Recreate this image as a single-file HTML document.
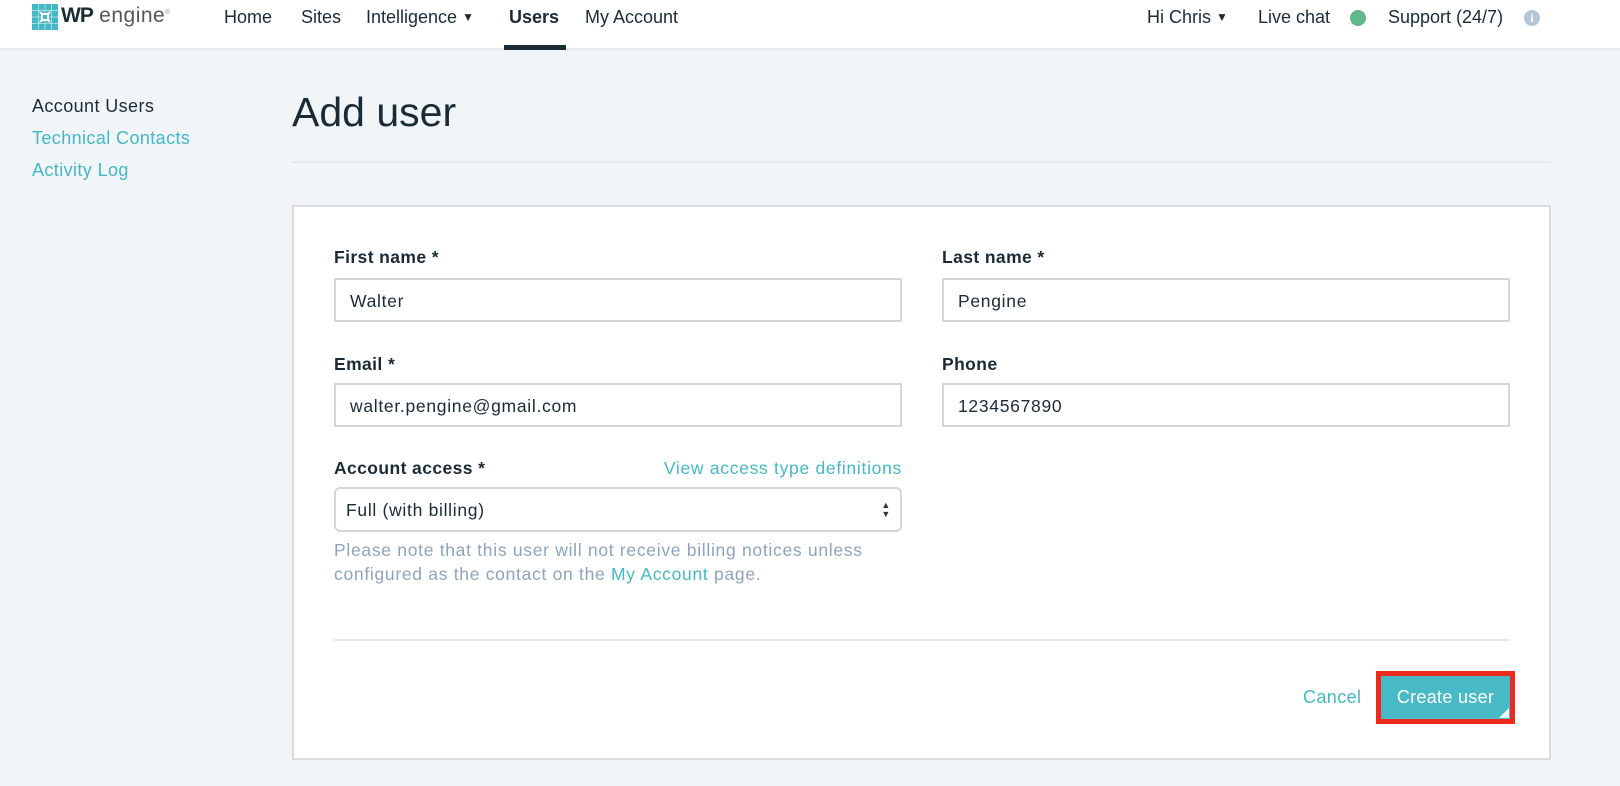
<!DOCTYPE html>
<html><head><meta charset="utf-8"><style>
*{box-sizing:border-box;margin:0;padding:0}
body{width:1620px;height:786px;background:#f2f5f8;font-family:"Liberation Sans",Arial,sans-serif;color:#1b2b36;position:relative;overflow:hidden}
.hdr{position:absolute;left:0;top:0;width:1620px;height:50px;background:#fff;border-bottom:2px solid #e3e9ef}
.a{position:absolute;white-space:nowrap}
.nav{font-size:18px;top:7px}
.teal{color:#44b8c5}
.lbl{font-weight:bold;font-size:17.5px;letter-spacing:0.4px}
.f{font-size:17.5px;letter-spacing:0.7px}
.inp{position:absolute;height:44px;border:2px solid #d3d5d7;background:#fff;font-size:17.5px;letter-spacing:0.7px;padding:11px 14px;white-space:nowrap}
</style></head><body>
<div class="hdr">
 <svg class="a" style="left:32px;top:4px" width="26" height="26" viewBox="0 0 26 26">
  <rect width="26" height="26" fill="#44b8c5"/>
  <g stroke="#fff" stroke-width="1" opacity=".5"><path d="M6.5 0V26M13 0V26M19.5 0V26M0 6.5H26M0 13H26M0 19.5H26"/></g>
  <path d="M7 7L11 9L13 9L15 9L19 7L17 11V15L19 19L15 17H11L7 19L9 15V11Z" fill="#fff"/>
  <rect x="11" y="11" width="4" height="4" fill="#44b8c5"/>
 </svg>
 <div class="a" style="left:61px;top:4px;font-size:21px;letter-spacing:0.5px"><b style="color:#1b2b36;letter-spacing:-1px">WP</b><span style="color:#555;font-weight:300;"> engine</span><sup style="font-size:6px;color:#888">®</sup></div>
 <div class="a nav" style="left:224px">Home</div>
 <div class="a nav" style="left:301px">Sites</div>
 <div class="a nav" style="left:366px">Intelligence <span style="font-size:12px;position:relative;top:-2px">▼</span></div>
 <div class="a nav" style="left:509px;font-weight:bold">Users</div>
 <div class="a" style="left:504px;top:45px;width:62px;height:5px;background:#1b2b36"></div>
 <div class="a nav" style="left:585px">My Account</div>
 <div class="a nav" style="left:1147px">Hi Chris <span style="font-size:12px;position:relative;top:-2px">▼</span></div>
 <div class="a nav" style="left:1258px">Live chat</div>
 <div class="a" style="left:1350px;top:10px;width:16px;height:16px;border-radius:50%;background:#5fb98a"></div>
 <div class="a nav" style="left:1388px">Support (24/7)</div>
 <div class="a" style="left:1524px;top:10px;width:16px;height:16px;border-radius:50%;background:#b3c6dc;color:#fff;font-size:12px;font-weight:bold;text-align:center;line-height:16px;font-family:'Liberation Serif',serif">i</div>
</div>

<div class="a" style="left:32px;top:96px;font-size:18px;letter-spacing:0.4px;color:#1b2b36">Account Users</div>
<div class="a teal" style="left:32px;top:128px;font-size:18px;letter-spacing:0.4px">Technical Contacts</div>
<div class="a teal" style="left:32px;top:160px;font-size:18px;letter-spacing:0.4px">Activity Log</div>

<div class="a" style="left:292px;top:89px;font-size:41px;color:#1b2b36">Add user</div>
<div class="a" style="left:292px;top:161px;width:1259px;height:2px;background:#e3e9ef"></div>

<div class="a" style="left:292px;top:205px;width:1259px;height:555px;background:#fff;border:2px solid #dadcde"></div>

<div class="a lbl" style="left:334px;top:247px">First name *</div>
<div class="inp" style="left:334px;top:278px;width:568px">Walter</div>
<div class="a lbl" style="left:942px;top:247px">Last name *</div>
<div class="inp" style="left:942px;top:278px;width:568px">Pengine</div>

<div class="a lbl" style="left:334px;top:354px">Email *</div>
<div class="inp" style="left:334px;top:383px;width:568px">walter.pengine@gmail.com</div>
<div class="a lbl" style="left:942px;top:354px">Phone</div>
<div class="inp" style="left:942px;top:383px;width:568px">1234567890</div>

<div class="a lbl" style="left:334px;top:458px">Account access *</div>
<div class="a teal f" style="right:718px;top:458px">View access type definitions</div>
<div class="inp" style="left:334px;top:487px;width:568px;height:45px;border-radius:6px;padding:11px 10px">Full (with billing)
 <div class="a" style="right:9px;top:12px;font-size:9px;line-height:9px;color:#333">▲<br>▼</div></div>
<div class="a f" style="left:334px;top:538px;line-height:24px;color:#8ea4bd">Please note that this user will not receive billing notices unless<br>configured as the contact on the <span class="teal">My Account</span> page.</div>

<div class="a" style="left:334px;top:639px;width:1176px;height:2px;background:#e3e9ef"></div>

<div class="a teal" style="left:1303px;top:687px;font-size:18px;letter-spacing:0.4px">Cancel</div>
<div class="a" style="left:1376px;top:671px;width:139px;height:53px;border:5px solid #ee2a1e;background:#48b9c7;color:#fff;font-size:18px;letter-spacing:0.3px;text-align:center;line-height:42px">Create user
 <div class="a" style="right:1px;bottom:1px;width:0;height:0;border-left:10px solid transparent;border-bottom:10px solid #fff"></div></div>
</body></html>
